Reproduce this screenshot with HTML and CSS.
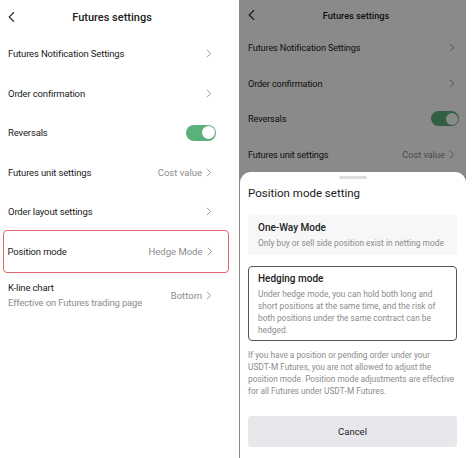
FILE: index.html
```html
<!DOCTYPE html>
<html lang="en">

<head>
    <meta charset="UTF-8">
    <meta name="viewport" content="width=device-width, initial-scale=1.0">
    <link rel="stylesheet" href="styles.css">
    <title>Futures settings</title>
</head>

<body>
    <div class="screens">

        <!-- plain settings screen -->
        <div class="screen left">
            <div class="header">
                <svg class="back" width="7" height="11" viewBox="0 0 7 11"><path d="M6 0.8L1.2 5.5L6 10.2" fill="none" stroke="#333" stroke-width="1.2"/></svg>
                <div class="title">Futures settings</div>
            </div>
            <div class="row">
                <span class="label">Futures Notification Settings</span>
                <span class="value"><svg class="chev" width="6" height="9" viewBox="0 0 6 9"><path d="M1 0.8L4.6 4.5L1 8.2" fill="none" stroke="#9a9a9a" stroke-width="1"/></svg></span>
            </div>
            <div class="row">
                <span class="label">Order confirmation</span>
                <span class="value"><svg class="chev" width="6" height="9" viewBox="0 0 6 9"><path d="M1 0.8L4.6 4.5L1 8.2" fill="none" stroke="#9a9a9a" stroke-width="1"/></svg></span>
            </div>
            <div class="row">
                <span class="label">Reversals</span>
                <span class="toggle"><span class="knob"></span></span>
            </div>
            <div class="row">
                <span class="label">Futures unit settings</span>
                <span class="value">Cost value <svg class="chev" width="6" height="9" viewBox="0 0 6 9"><path d="M1 0.8L4.6 4.5L1 8.2" fill="none" stroke="#9a9a9a" stroke-width="1"/></svg></span>
            </div>
            <div class="row">
                <span class="label">Order layout settings</span>
                <span class="value"><svg class="chev" width="6" height="9" viewBox="0 0 6 9"><path d="M1 0.8L4.6 4.5L1 8.2" fill="none" stroke="#9a9a9a" stroke-width="1"/></svg></span>
            </div>
            <div class="row marked">
                <span class="label">Position mode</span>
                <span class="value">Hedge Mode <svg class="chev" width="6" height="9" viewBox="0 0 6 9"><path d="M1 0.8L4.6 4.5L1 8.2" fill="none" stroke="#9a9a9a" stroke-width="1"/></svg></span>
            </div>
            <div class="row tall">
                <span class="label">K-line chart<span class="sub">Effective on Futures trading page</span></span>
                <span class="value">Bottom <svg class="chev" width="6" height="9" viewBox="0 0 6 9"><path d="M1 0.8L4.6 4.5L1 8.2" fill="none" stroke="#9a9a9a" stroke-width="1"/></svg></span>
            </div>
        </div>

        <!-- same screen with the position mode sheet open -->
        <div class="screen right">
            <div class="header">
                <svg class="back" width="7" height="11" viewBox="0 0 7 11"><path d="M6 0.8L1.2 5.5L6 10.2" fill="none" stroke="#333" stroke-width="1.2"/></svg>
                <div class="title">Futures settings</div>
            </div>
            <div class="row">
                <span class="label">Futures Notification Settings</span>
                <span class="value"><svg class="chev" width="6" height="9" viewBox="0 0 6 9"><path d="M1 0.8L4.6 4.5L1 8.2" fill="none" stroke="#9a9a9a" stroke-width="1"/></svg></span>
            </div>
            <div class="row">
                <span class="label">Order confirmation</span>
                <span class="value"><svg class="chev" width="6" height="9" viewBox="0 0 6 9"><path d="M1 0.8L4.6 4.5L1 8.2" fill="none" stroke="#9a9a9a" stroke-width="1"/></svg></span>
            </div>
            <div class="row">
                <span class="label">Reversals</span>
                <span class="toggle"><span class="knob"></span></span>
            </div>
            <div class="row">
                <span class="label">Futures unit settings</span>
                <span class="value">Cost value <svg class="chev" width="6" height="9" viewBox="0 0 6 9"><path d="M1 0.8L4.6 4.5L1 8.2" fill="none" stroke="#9a9a9a" stroke-width="1"/></svg></span>
            </div>

            <div class="dim"></div>

            <div class="sheet">
                <div class="handle"></div>
                <div class="sheet-title">Position mode setting</div>

                <div class="mode">
                    <div class="mode-name">One-Way Mode</div>
                    <div class="mode-text">Only buy or sell side position exist in netting mode</div>
                </div>

                <div class="mode selected">
                    <div class="mode-name">Hedging mode</div>
                    <div class="mode-text">Under hedge mode, you can hold both long and short positions at the same time, and the risk of both positions under the same contract can be hedged.</div>
                </div>

                <p class="note">If you have a position or pending order under your USDT&#8209;M Futures, you are not allowed to adjust the position mode. Position mode adjustments are effective for all Futures under USDT&#8209;M Futures.</p>

                <button class="cancel" type="button">Cancel</button>
            </div>
        </div>

    </div>
</body>

</html>
```

FILE: styles.css
```css
html {
    box-sizing: border-box;
}

*,
*::before,
*::after {
    margin: 0;
    padding: 0;
    box-sizing: inherit;
}

body {
    background-color: #fff;
    font-family: Roboto, "Noto Sans", sans-serif;
    color: #222;
}

.screens {
    display: flex;
    width: 474px;
    height: 458px;
}

.screen {
    position: relative;
    height: 458px;
    overflow: hidden;
    background-color: #fff;
}

.left {
    width: 239px;
    padding: 0 23px 0 8px;
}

.right {
    width: 227px;
    padding: 0 7px 0 9px;
}

/* header */

.header {
    position: relative;
    display: flex;
    align-items: center;
    justify-content: center;
}

.left .header {
    height: 34px;
}

.right .header {
    height: 30px;
}

.back {
    position: absolute;
    left: 0;
    top: 50%;
    transform: translateY(-50%);
}

.left .title {
    font-size: 11px;
    font-weight: 500;
}

.right .title {
    font-size: 9.2px;
    font-weight: 500;
    margin-left: 5px;
}

/* rows */

.row {
    display: flex;
    align-items: center;
    justify-content: space-between;
}

.left .row {
    height: 39.5px;
    font-size: 9.5px;
}

.right .row {
    height: 35.5px;
    font-size: 9.2px;
}

.label {
    display: flex;
    flex-direction: column;
    letter-spacing: -0.15px;
}

.sub {
    margin-top: 4px;
    color: #8c8c8c;
}

.value {
    display: flex;
    align-items: center;
    gap: 4px;
    color: #8c8c8c;
    padding-right: 4px;
}

.toggle {
    position: relative;
    width: 30px;
    height: 16px;
    border-radius: 8px;
    background-color: #5cb07a;
}

.right .toggle {
    width: 28px;
    height: 15px;
}

.knob {
    position: absolute;
    right: 1.5px;
    top: 1.5px;
    width: 13px;
    height: 13px;
    border-radius: 50%;
    background-color: #fff;
}

.right .knob {
    width: 12px;
    height: 12px;
}

.marked {
    margin: -1.75px -13px -1.75px -5px;
    height: 43px !important;
    padding: 0 11.5px 0 3.5px;
    border: 1.5px solid #e2656e;
    border-radius: 4px;
}

.tall {
    height: 48px !important;
}

/* overlay + sheet */

.dim {
    position: absolute;
    inset: 0;
    background-color: rgba(0, 0, 0, 0.46);
}

.sheet {
    position: absolute;
    left: 1px;
    right: 0;
    bottom: 0;
    top: 172px;
    background-color: #fff;
    border-radius: 11px 11px 0 0;
    padding: 0 9px 0 8px;
}

.handle {
    width: 28px;
    height: 2.5px;
    border-radius: 2px;
    background-color: #ddd;
    margin: 4px auto 0;
}

.sheet-title {
    font-size: 11.5px;
    color: #1a1a1a;
    margin-top: 6.5px;
    line-height: 16px;
}

.mode {
    margin-top: 14px;
    padding: 5px 5px 5px 9px;
    border-radius: 4px;
    background-color: #f7f7f8;
    border: 1px solid #f7f7f8;
}

.mode.selected {
    margin-top: 11px;
    padding-bottom: 4px;
    background-color: #fff;
    border-color: #555;
}

.mode-name {
    font-size: 10px;
    font-weight: 500;
    line-height: 14px;
}

.mode-text {
    margin-top: 2px;
    font-size: 8.4px;
    line-height: 12px;
    color: #8c8c8c;
}

.note {
    margin-top: 8px;
    font-size: 8.3px;
    line-height: 12px;
    color: #8c8c8c;
}

.cancel {
    display: block;
    width: 100%;
    height: 31px;
    margin-top: 19px;
    border: none;
    border-radius: 3px;
    background-color: #e8e8ec;
    font-family: Roboto, "Noto Sans", sans-serif;
    font-size: 9.5px;
    color: #222;
}
```
